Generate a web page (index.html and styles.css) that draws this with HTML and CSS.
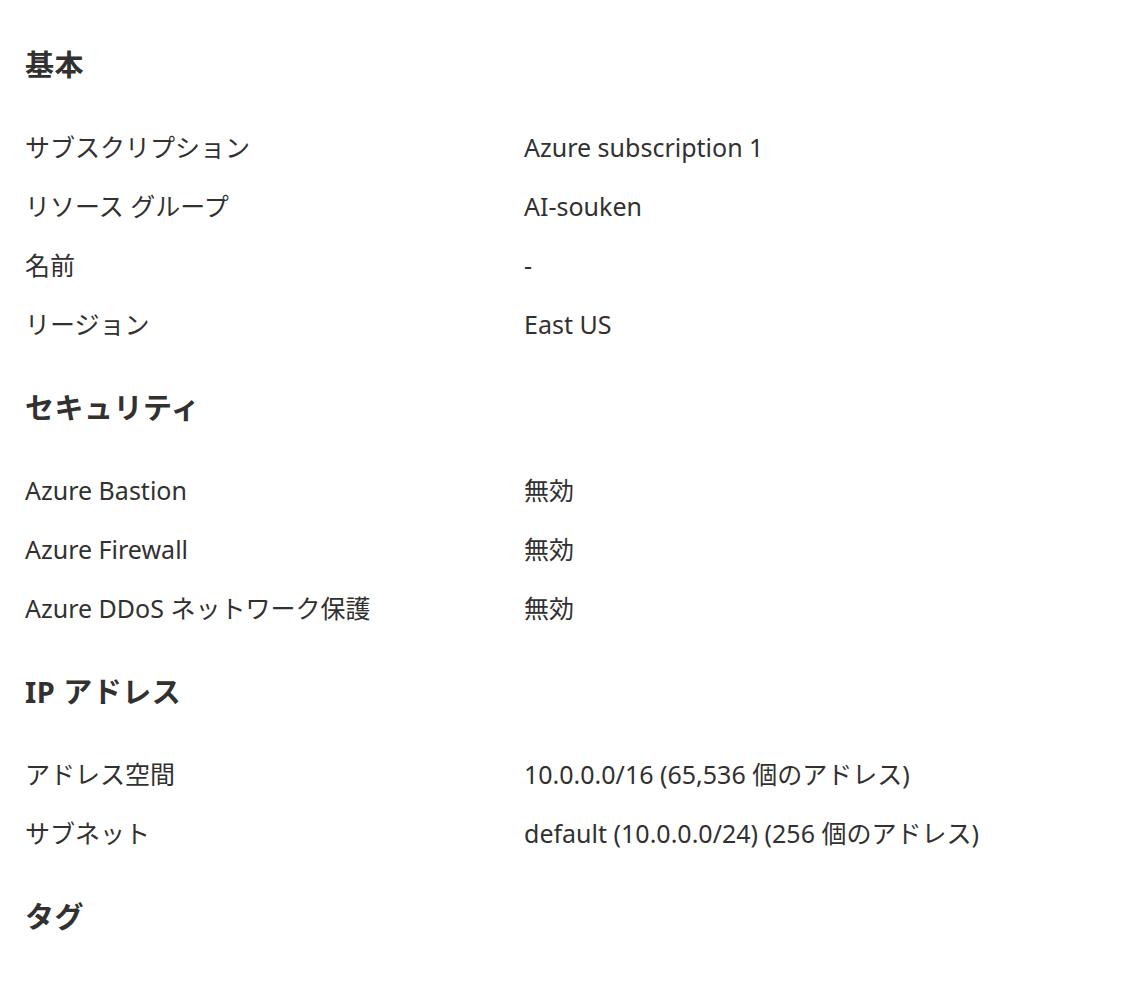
FILE: index.html
```html
<!DOCTYPE html>
<html lang="ja">
<head>
<meta charset="utf-8">
<title>確認および作成</title>
<link rel="stylesheet" href="styles.css">
</head>
<body>
<main class="summary">
  <section class="section">
    <h2 class="section-title">基本</h2>
    <dl class="props">
      <dt>サブスクリプション</dt><dd>Azure subscription 1</dd>
      <dt>リソース グループ</dt><dd>AI-souken</dd>
      <dt>名前</dt><dd>-</dd>
      <dt>リージョン</dt><dd>East US</dd>
    </dl>
  </section>
  <section class="section">
    <h2 class="section-title">セキュリティ</h2>
    <dl class="props">
      <dt>Azure Bastion</dt><dd>無効</dd>
      <dt>Azure Firewall</dt><dd>無効</dd>
      <dt>Azure DDoS ネットワーク保護</dt><dd>無効</dd>
    </dl>
  </section>
  <section class="section">
    <h2 class="section-title">IP アドレス</h2>
    <dl class="props">
      <dt>アドレス空間</dt><dd>10.0.0.0/16 (65,536 個のアドレス)</dd>
      <dt>サブネット</dt><dd>default (10.0.0.0/24) (256 個のアドレス)</dd>
    </dl>
  </section>
  <section class="section">
    <h2 class="section-title">タグ</h2>
  </section>
</main>
</body>
</html>
```
FILE: styles.css
```css
html, body {
  margin: 0;
  padding: 0;
  background: #ffffff;
}
body {
  font-family: "Noto Sans", "Noto Sans CJK JP", sans-serif;
  color: #323130;
}
.summary {
  padding: 11px 25px 0 25px;
}
.section-title {
  margin: 34px 0 33px 0;
  font-size: 29px;
  line-height: 40px;
  font-weight: 700;
  letter-spacing: 0.5px;
  color: #323130;
}
.props {
  display: grid;
  grid-template-columns: 499px 1fr;
  margin: 0;
}
.props dt, .props dd {
  margin: 0;
  font-size: 25px;
  line-height: 59px;
  white-space: nowrap;
}
```
